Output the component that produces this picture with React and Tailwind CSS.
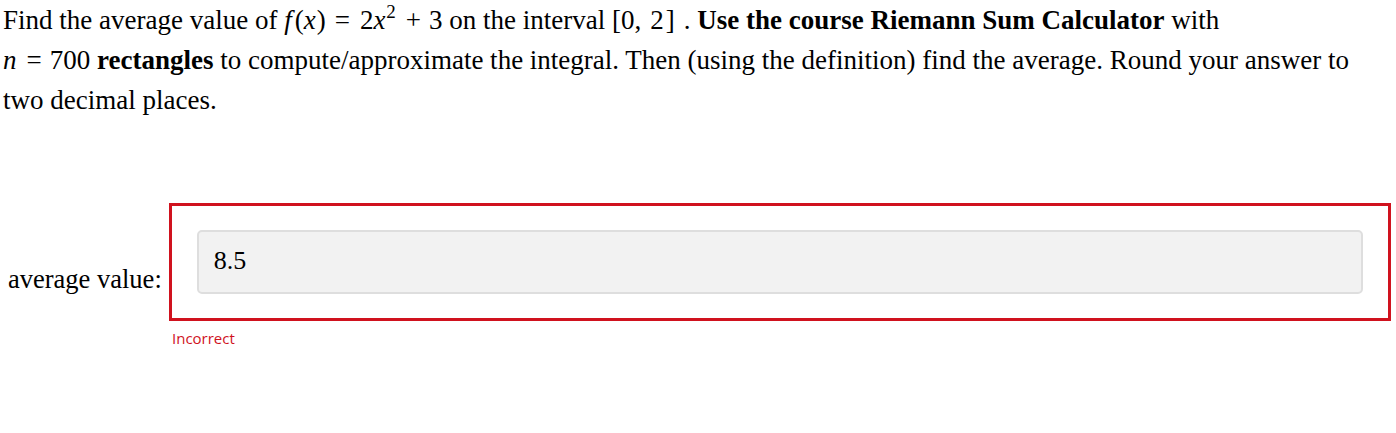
export default function App() {
  const serif = { fontFamily: '"Liberation Serif", "Times New Roman", serif' }
  return (
    <div className="bg-white w-[1396px] h-[433px] text-black" style={serif}>
      <p className="pl-[3px] pr-4 text-[27px] leading-[40px]">
        Find the average value of{' '}
        <span className="whitespace-nowrap">
          <i className="mr-[3px]">f</i>(<i>x</i>
          <span className="ml-[1px]">)</span>
          <span className="ml-[9px] mr-[10px]">=</span>2<i>x</i>
          <sup className="text-[19px] relative top-[-11px] ml-[1px]">2</sup>
          <span className="ml-[10px] mr-[8px]">+</span>3
        </span>{' '}
        on the interval [0,<span className="ml-[9px]">2</span>
        <span className="ml-[2px]">]</span>
        <span className="ml-[9px]">.</span> <b>Use the course Riemann Sum Calculator</b> with
        <br />
        <i>n</i>
        <span className="ml-[10px] mr-[8px]">=</span>700 <b>rectangles</b> to compute/approximate the integral. Then
        (using the definition) find the average. Round your answer to two decimal places.
      </p>
      <div className="mt-[83px] flex items-end">
        <div className="pl-[8px] pr-[7px] text-[26.5px] pb-[21px]">average value:</div>
        <div className="w-[1222px] h-[118px] border-[3px] border-[#d0121e] flex items-center px-[25px]">
          <div
            className="w-full h-[64px] rounded-[5px] border-2 border-[#dedede] bg-[#f2f2f2] text-[26px] pl-[15px] pt-[14px] leading-[30px]"
            style={serif}
          >
            8.5
          </div>
        </div>
      </div>
      <div
        className="ml-[172px] mt-[6px] text-[15px] text-[#d0121e]"
        style={{ fontFamily: '"Open Sans", "Noto Sans", sans-serif' }}
      >
        Incorrect
      </div>
    </div>
  )
}
